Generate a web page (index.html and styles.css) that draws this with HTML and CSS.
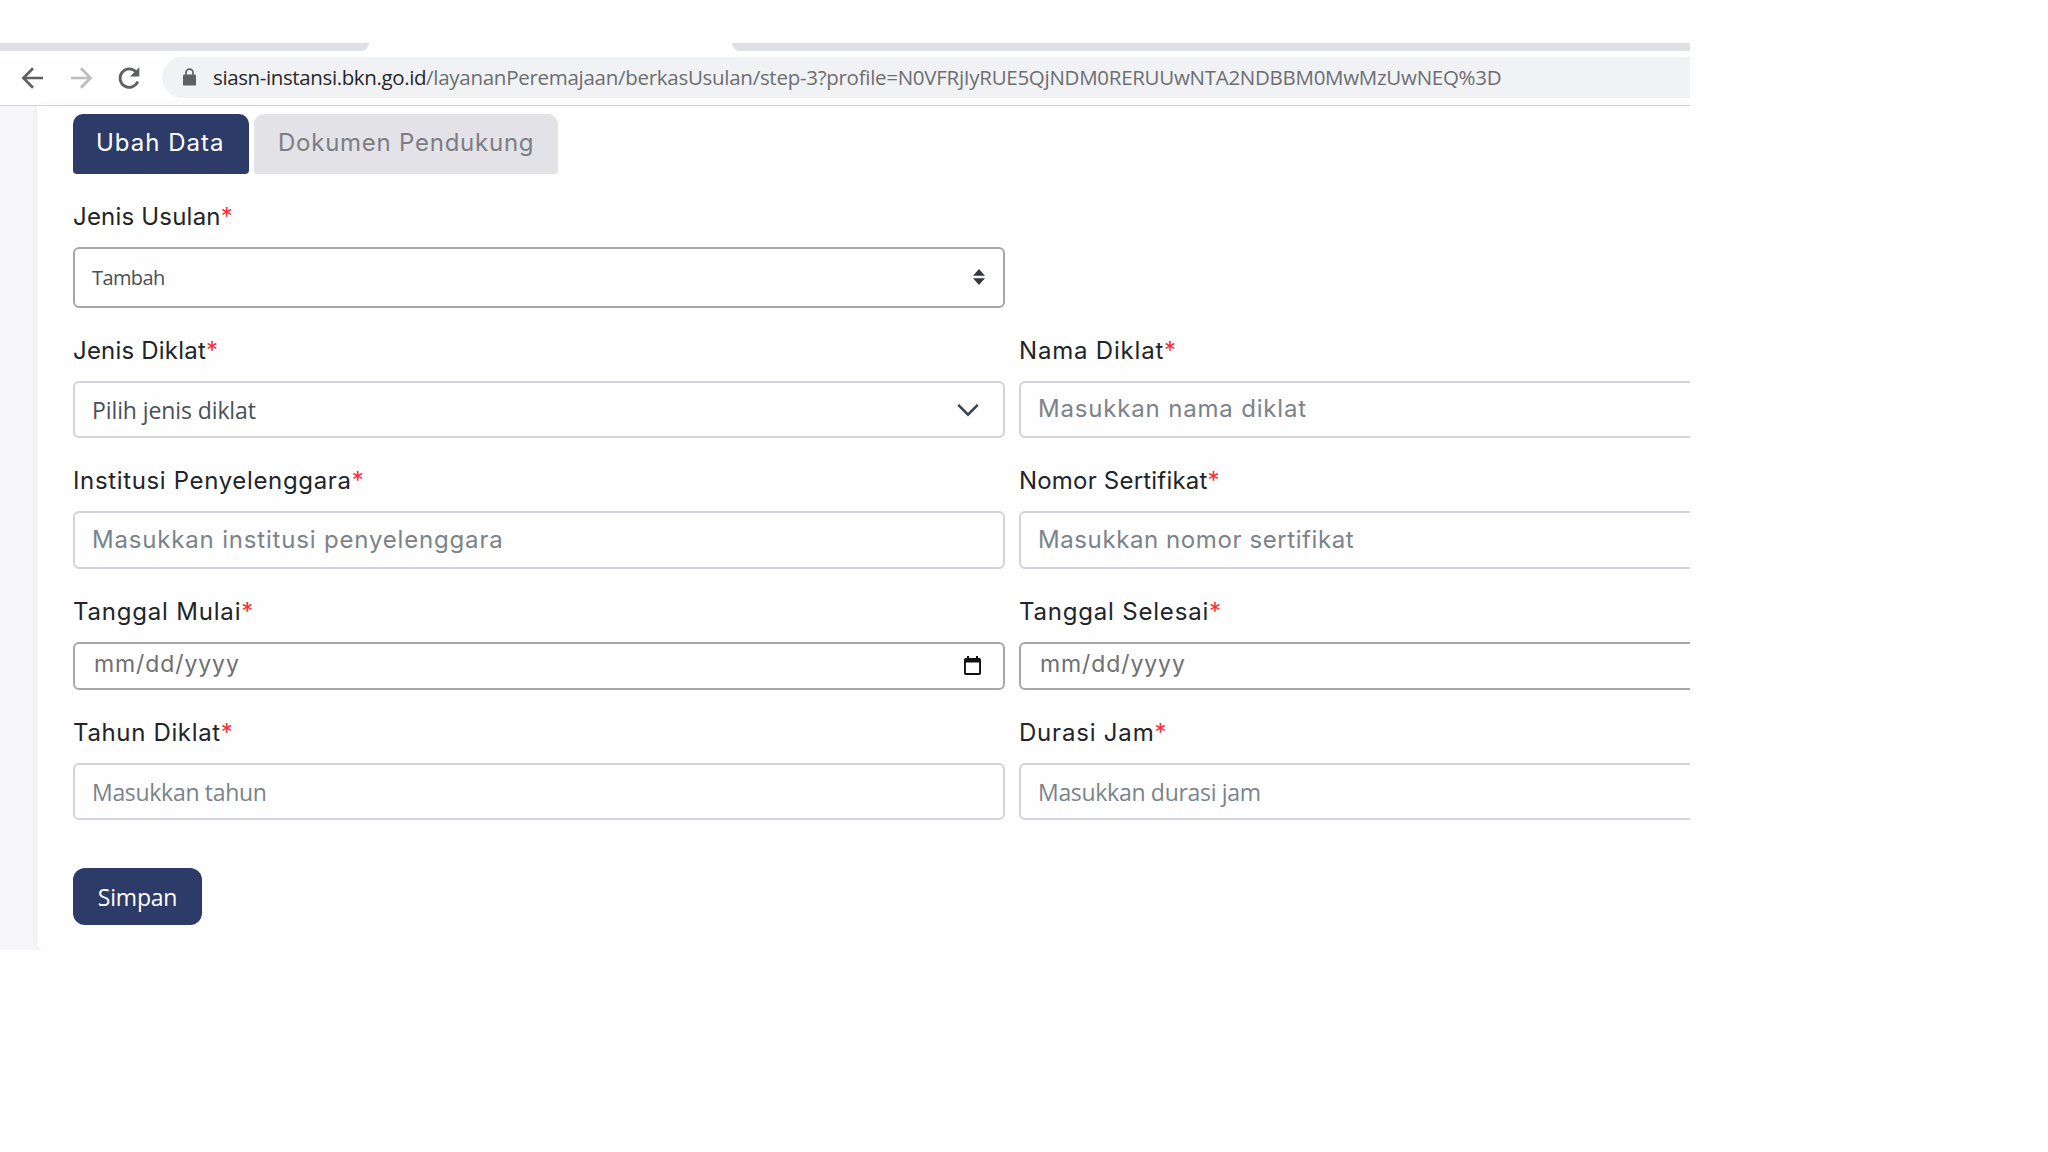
FILE: index.html
```
<!DOCTYPE html>
<html lang="id">
<head>
  <meta charset="UTF-8" />
  <meta name="viewport" content="width=device-width, initial-scale=1.0"/>
  <title>Layanan Peremajaan</title>
  <link rel="stylesheet" href="styles.css">
</head>
<body>

  <div class="browser">
    <div class="tab-strip">
      <div class="strip-left"></div>
      <div class="strip-right"></div>
    </div>

    <div class="toolbar">
      <svg class="nav-icon" viewBox="0 0 24 24"><path d="M22 12H3M12 2.2L2.4 12l9.6 9.8" fill="none" stroke="#5f6063" stroke-width="2.7"/></svg>
      <svg class="nav-icon" viewBox="0 0 24 24"><path d="M2 12h19M12 2.2l9.6 9.8-9.6 9.8" fill="none" stroke="#bcbdbf" stroke-width="2.7"/></svg>
      <svg class="nav-icon" viewBox="0 0 24 24"><path d="M20.8 15.6A9.2 9.2 0 1 1 19.2 6.1" fill="none" stroke="#5f6063" stroke-width="2.8"/><path d="M22.3 1.2v9.3H13z" fill="#5f6063"/></svg>
      <div class="address">
        <svg class="lock" viewBox="0 0 13 18"><path d="M3 7V4.6a3.5 3.5 0 0 1 7 0V7" fill="none" stroke="#5f6063" stroke-width="1.7"/><rect x="0" y="6.4" width="13" height="11.2" rx="1.2" fill="#5f6063"/></svg>
        <span class="domain">siasn-instansi.bkn.go.id</span><span class="path">/layananPeremajaan/berkasUsulan/step-3?profile=N0VFRjIyRUE5QjNDM0RERUUwNTA2NDBBM0MwMzUwNEQ%3D</span>
      </div>
    </div>

    <div class="page">
      <div class="card">
        <div class="tabs">
          <div class="tab active">Ubah Data</div>
          <div class="tab">Dokumen Pendukung</div>
        </div>

        <div class="form">
          <div class="field">
            <label class="tight">Jenis Usulan<span class="req">*</span></label>
            <div class="input select dark">Tambah
              <svg class="caret" viewBox="0 0 12 16"><path d="M6 0l6 6.7H0zM6 16l6-6.7H0z" fill="#343a40"/></svg>
            </div>
          </div>
          <div class="field"></div>

          <div class="field">
            <label class="tight">Jenis Diklat<span class="req">*</span></label>
            <div class="input dropdown">Pilih jenis diklat
              <svg class="chevron" viewBox="0 0 22 14"><path d="M1.3 1.8L11 11.6l9.7-9.8" fill="none" stroke="#394452" stroke-width="2.6"/></svg>
            </div>
          </div>
          <div class="field">
            <label class="wide">Nama Diklat<span class="req">*</span></label>
            <div class="input placeholder">Masukkan nama diklat</div>
          </div>

          <div class="field">
            <label>Institusi Penyelenggara<span class="req">*</span></label>
            <div class="input placeholder">Masukkan institusi penyelenggara</div>
          </div>
          <div class="field">
            <label class="tight">Nomor Sertifikat<span class="req">*</span></label>
            <div class="input placeholder narrow">Masukkan nomor sertifikat</div>
          </div>

          <div class="field">
            <label class="wide">Tanggal Mulai<span class="req">*</span></label>
            <div class="input date dark">mm/dd/yyyy
              <svg class="calendar" viewBox="0 0 17 19"><path d="M3 0h2v2h7V0h2v2h1.300A1.700 1.700 0 0 1 17 3.700v13.600A1.700 1.700 0 0 1 15.300 19H1.700A1.700 1.700 0 0 1 0 17.300V3.700A1.700 1.700 0 0 1 1.700 2H3zM1.900 6.500v10.600h13.200V6.500z" fill="#111" fill-rule="evenodd"/></svg>
            </div>
          </div>
          <div class="field">
            <label class="wide">Tanggal Selesai<span class="req">*</span></label>
            <div class="input date dark">mm/dd/yyyy</div>
          </div>

          <div class="field">
            <label>Tahun Diklat<span class="req">*</span></label>
            <div class="input number">Masukkan tahun</div>
          </div>
          <div class="field">
            <label class="wide">Durasi Jam<span class="req">*</span></label>
            <div class="input number">Masukkan durasi jam</div>
          </div>
        </div>

        <button class="btn">Simpan</button>
      </div>
    </div>
  </div>

</body>
</html>
```
FILE: styles.css
```
* {
  box-sizing: border-box;
}
body {
  margin: 0;
  background: #fefefe;
  font-family: Inter, "Open Sans", sans-serif;
  color: #212529;
}
.browser {
  width: 1690px;
  height: 950px;
  padding-top: 43px;
  overflow: hidden;
}
.tab-strip {
  display: flex;
  justify-content: space-between;
  height: 8px;
}
.strip-left,
.strip-right {
  background: #dee0e3;
}
.strip-left {
  width: 369px;
  border-bottom-right-radius: 8px;
}
.strip-right {
  width: 958px;
  border-bottom-left-radius: 8px;
}
.toolbar {
  display: flex;
  align-items: center;
  height: 55px;
  padding: 0 0 1px 21px;
  border-bottom: 1px solid #d6d7dc;
  background: white;
}
.nav-icon {
  width: 24px;
  height: 24px;
  margin-right: 24px;
  flex: none;
}
.address {
  display: flex;
  align-items: center;
  flex: 1;
  height: 41px;
  margin-left: -3px;
  padding-left: 21px;
  border-radius: 21px 0 0 21px;
  background: #f1f2f4;
  font-family: "Open Sans", sans-serif;
  font-size: 20.5px;
  line-height: 41px;
  white-space: nowrap;
}
.lock {
  width: 13px;
  height: 18px;
  margin: 0 17px 2px 0;
}
.domain {
  color: #26282b;
  letter-spacing: -0.38px;
}
.path {
  color: #6b6e72;
  letter-spacing: -0.28px;
}
.page {
  height: 844px;
  padding-left: 37px;
  background: #f7f7f9;
}
.card {
  width: 1960px;
  height: 844px;
  padding: 8px 36px 0;
  background: #fefefe;
  border-bottom-left-radius: 6px;
  box-shadow: 0 0 10px rgba(60,60,100,0.07);
}
.tabs {
  display: flex;
  gap: 5px;
}
.tab {
  width: 304px;
  height: 60px;
  padding-left: 24px;
  border-radius: 10px 10px 4px 4px;
  background: #e2e2e7;
  color: #7d7e83;
  font-size: 24px;
  line-height: 58px;
  letter-spacing: 0.75px;
}
.tab.active {
  width: 176px;
  padding-left: 23px;
  background: #2d3b68;
  color: white;
  letter-spacing: 1px;
}
.form {
  display: grid;
  grid-template-columns: 932px 932px;
  column-gap: 14px;
  row-gap: 24px;
  padding-top: 24px;
}
label {
  display: block;
  height: 36px;
  margin-bottom: 13px;
  font-size: 24px;
  line-height: 38px;
  letter-spacing: 0.65px;
}
label.tight {
  letter-spacing: 0.2px;
}
label.wide {
  letter-spacing: 0.8px;
}
.req {
  color: #fb2c36;
}
.input {
  display: flex;
  align-items: center;
  justify-content: space-between;
  height: 57.5px;
  padding: 1px 17px 0;
  border: 2px solid #d3d3d9;
  border-radius: 6px;
}
.dark {
  border-color: #a7a7ab;
}
.select {
  height: 60.5px;
  padding: 0 18px 0 17px;
  font-family: "Open Sans", sans-serif;
  font-size: 20px;
  letter-spacing: -0.6px;
  color: #495057;
}
.dropdown {
  font-family: "Open Sans", sans-serif;
  font-size: 23px;
  letter-spacing: -0.1px;
  color: #495057;
}
.placeholder {
  padding-bottom: 2px;
  font-size: 24px;
  letter-spacing: 0.82px;
  color: #7b838a;
}
.narrow {
  letter-spacing: 0.59px;
}
.date {
  height: 48px;
  padding: 0 22px 3px 19px;
  font-size: 23px;
  letter-spacing: 0.9px;
  color: #6f7072;
}
.number {
  font-family: "Open Sans", sans-serif;
  font-size: 23px;
  letter-spacing: -0.3px;
  color: #7b838a;
}
.caret {
  width: 12px;
  height: 16px;
}
.chevron {
  width: 22px;
  height: 14px;
  margin-right: 7px;
}
.calendar {
  width: 17px;
  height: 19px;
  margin-top: 2px;
}
.btn {
  width: 129px;
  height: 57px;
  margin-top: 48px;
  padding: 0;
  border: none;
  border-radius: 12px;
  background: #2d3b68;
  color: white;
  font-family: "Open Sans", sans-serif;
  font-size: 23px;
  letter-spacing: -0.2px;
}
```
